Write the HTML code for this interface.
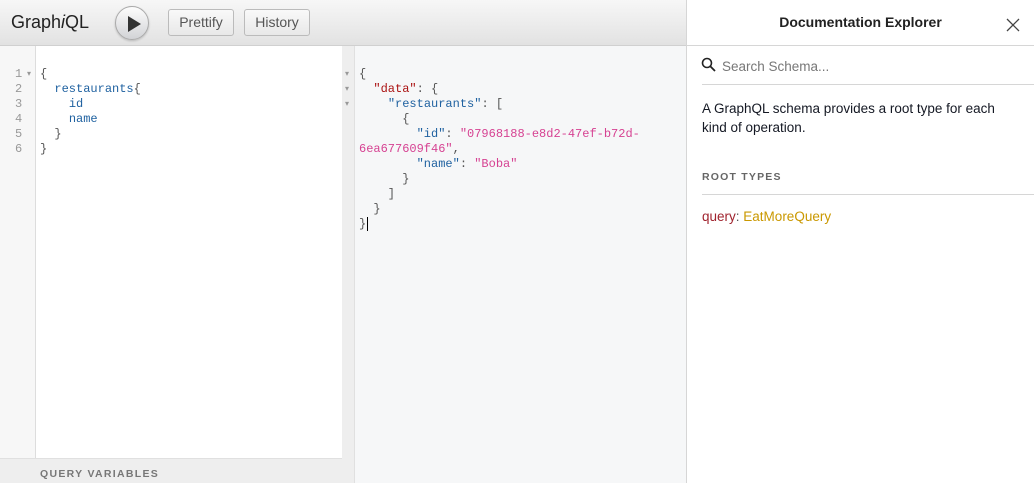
<!DOCTYPE html>
<html><head><style>
*{margin:0;padding:0;box-sizing:border-box}
body{width:1034px;height:483px;overflow:hidden;font-family:"Liberation Sans",sans-serif;background:#fff;position:relative}
.tb{position:absolute;left:0;top:0;width:686px;height:46px;background:linear-gradient(#f7f7f7,#e2e2e2);border-bottom:1px solid #d0d0d0}
.title{position:absolute;left:11px;top:12px;font-size:18px;color:#222}
.run{position:absolute;left:115px;top:6px;width:34px;height:34px;border-radius:50%;border:1px solid #aaa;background:linear-gradient(#fdfdfd,#d2d3d6);box-shadow:0 1px 2px rgba(0,0,0,.2)}
.run:after{content:"";position:absolute;left:12px;top:9px;border-left:13px solid #333;border-top:8px solid transparent;border-bottom:8px solid transparent}
.btn{position:absolute;top:9px;height:27px;border:1px solid #bbb;border-radius:3px;background:linear-gradient(#f9f9f9,#e8e8e8);font-size:14px;color:#555;text-align:center;line-height:25px}
.gut{position:absolute;left:0;top:46px;width:36px;height:412px;background:#f7f7f7;border-right:1px solid #ddd}
.ed{position:absolute;left:36px;top:46px;width:306px;height:412px;background:#fff}
.qv{position:absolute;left:0;top:458px;width:342px;height:25px;background:#eee;border-top:1px solid #e0e0e0;font-size:10.5px;font-weight:bold;letter-spacing:1.3px;color:#777;padding:9px 0 0 40px}
.div{position:absolute;left:342px;top:46px;width:13px;height:437px;background:#eee;border-right:1px solid #e0e0e0}
.res{position:absolute;left:355px;top:46px;width:331px;height:437px;background:#f6f7f8}
.code{position:absolute;font-family:"Liberation Mono",monospace;font-size:12px;line-height:15px;white-space:pre}
.doc{position:absolute;left:686px;top:0;width:348px;height:483px;background:#fff;border-left:1px solid #d6d6d6}
.num{color:#999}.p{color:#555}.f{color:#1f61a0}.k{color:#a11}.s{color:#d64292}
</style></head><body>
<div class="tb">
<div class="title">Graph<i>i</i>QL</div>
<div class="run"></div>
<div class="btn" style="left:168px;width:66px">Prettify</div>
<div class="btn" style="left:244px;width:66px">History</div>
</div>
<div class="gut"></div>
<div class="ed"></div>
<div class="code num" style="left:15px;top:67px">1
2
3
4
5
6</div>
<div class="code" style="left:27px;top:67px;color:#999;font-size:8px">▾</div>
<div class="code" style="left:40px;top:67px"><span class="p">{</span>
  <span class="f">restaurants</span><span class="p">{</span>
    <span class="f">id</span>
    <span class="f">name</span>
  <span class="p">}</span>
<span class="p">}</span></div>
<div class="qv">QUERY VARIABLES</div>
<div class="div"></div>
<div class="res"></div>
<div class="code" style="left:345px;top:67px;color:#999;font-size:8px">▾
▾
▾</div>
<div class="code p" style="left:359px;top:67px">{
  <span class="k">"data"</span>: {
    <span class="f">"restaurants"</span>: [
      {
        <span class="f">"id"</span>: <span class="s">"07968188-e8d2-47ef-b72d-</span>
<span class="s">6ea677609f46"</span>,
        <span class="f">"name"</span>: <span class="s">"Boba"</span>
      }
    ]
  }
}<span style="border-left:1px solid #000;margin-left:1px"></span></div>
<div class="doc">
<div style="position:absolute;left:0;width:347px;top:14px;text-align:center;font-weight:bold;font-size:14px;color:#222">Documentation Explorer</div>
<svg style="position:absolute;left:319px;top:18px" width="14" height="14"><path d="M1 1L13 13M13 1L1 13" stroke="#444" stroke-width="1.3"/></svg>
<div style="position:absolute;left:0;top:45px;width:348px;border-top:1px solid #d6d6d6"></div>
<svg style="position:absolute;left:14px;top:57px" width="16" height="16"><circle cx="6" cy="6" r="4.5" fill="none" stroke="#222" stroke-width="1.6"/><path d="M9.5 9.5L14 14" stroke="#222" stroke-width="1.8"/></svg>
<div style="position:absolute;left:35px;top:59px;font-size:13.5px;color:#777">Search Schema...</div>
<div style="position:absolute;left:15px;top:84px;width:333px;border-top:1px solid #d6d6d6"></div>
<div style="position:absolute;left:15px;top:99px;font-size:13.5px;line-height:19px;color:#141823;width:320px">A GraphQL schema provides a root type for each kind of operation.</div>
<div style="position:absolute;left:15px;top:171px;font-size:10.5px;font-weight:bold;letter-spacing:1.2px;color:#666">ROOT TYPES</div>
<div style="position:absolute;left:15px;top:194px;width:333px;border-top:1px solid #d6d6d6"></div>
<div style="position:absolute;left:15px;top:209px;font-size:13.5px"><span style="color:#a0232e">query</span><span style="color:#555">: </span><span style="color:#ca9800">EatMoreQuery</span></div>
</div>
</body></html>
